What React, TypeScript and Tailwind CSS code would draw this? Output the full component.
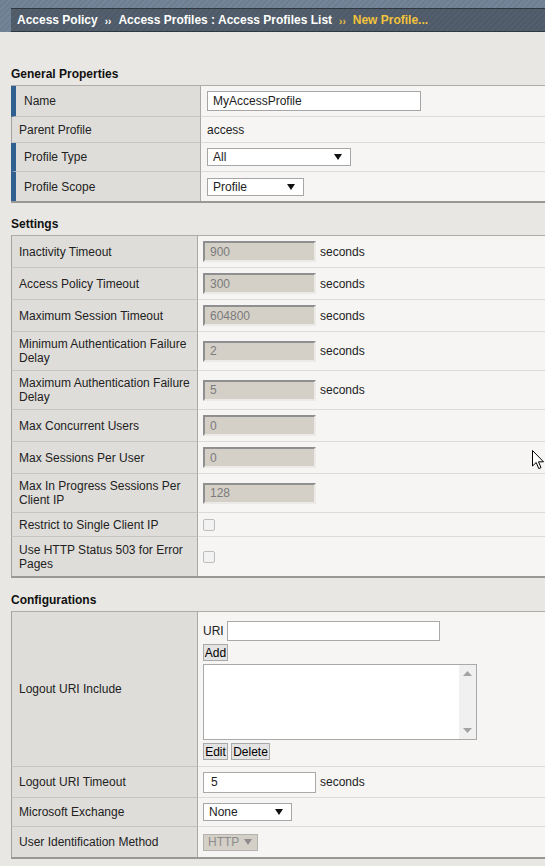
import React from "react";

function Arrow({ color = "#111" }: { color?: string }) {
  return (
    <svg width="8" height="6" viewBox="0 0 8 6">
      <path d="M0 0 L8 0 L4 6 Z" fill={color} />
    </svg>
  );
}

function Row({
  label,
  h,
  lw,
  blue,
  last,
  top,
  children,
}: {
  label: React.ReactNode;
  h: string;
  lw: string;
  blue?: boolean;
  last?: boolean;
  top?: boolean;
  children?: React.ReactNode;
}) {
  return (
    <div className={`flex ${h}`}>
      <div
        className={`${lw} shrink-0 bg-[#dfddd9] border-r border-r-[#aaa8a4] flex items-center leading-[14px] ${
          blue ? "border-l-[5px] border-l-[#30608f] pl-[8px]" : "border-l border-l-[#a3a19d] pl-[7px]"
        } ${last ? "" : "border-b border-b-[#c6c4c0]"}`}
      >
        <div>{label}</div>
      </div>
      <div
        className={`flex-1 bg-[#f6f5f3] flex pl-[5px] ${top ? "flex-col items-start pt-[9px]" : "items-center"} ${
          last ? "" : "border-b border-b-[#dddbd7]"
        }`}
      >
        {children}
      </div>
    </div>
  );
}

function Disabled({ value }: { value: string }) {
  return (
    <div className="w-[113px] h-[21px] bg-[#d4d0c8] border-2 border-t-[#8f8f8f] border-l-[#8f8f8f] border-r-[#eceae7] border-b-[#eceae7] text-[#7b7b7b] pl-[5px] flex items-center leading-none">
      {value}
    </div>
  );
}

function Seconds() {
  return <span className="ml-[4px]">seconds</span>;
}

function Select({ value, w }: { value: string; w: string }) {
  return (
    <div className={`${w} h-[18px] bg-white border border-[#a6a6a6] flex items-center justify-between pl-[5px] pr-[8px] leading-none`}>
      <span>{value}</span>
      <Arrow />
    </div>
  );
}

function Check() {
  return <div className="w-[12px] h-[12px] rounded-[2px] border border-[#bdbdbd] bg-[#f2f2f2]" />;
}

function Btn({ children, w }: { children: React.ReactNode; w: string }) {
  return (
    <div className={`${w} h-[17px] bg-[#e3e3e3] border border-[#a9a9a9] flex items-center justify-center leading-none text-black`}>
      {children}
    </div>
  );
}

export default function App() {
  const S = "w-[187px]";
  return (
    <div className="relative min-h-[866px] bg-[#e8e7e3] font-['Liberation_Sans',Arial,sans-serif] text-[12px] text-[#222]">
      <div className="h-[32px] pt-[8px] pl-[11px] bg-[repeating-linear-gradient(135deg,#6d7f8e_0px,#6d7f8e_2px,#73859a_2px,#73859a_4px)]">
        <div className="h-[24px] bg-[repeating-linear-gradient(135deg,#4e5a67_0px,#4e5a67_2px,#535f6c_2px,#535f6c_4px)] border-y border-y-[#2f3841] flex items-center pl-[6px] text-white font-bold text-[12px] whitespace-nowrap">
          <span>Access Policy</span>
          <span className="mx-[7px] text-[10px] mt-[3px]">››</span>
          <span>Access Profiles : Access Profiles List</span>
          <span className="mx-[7px] text-[10px] mt-[3px] text-[#f2c33c]">››</span>
          <span className="text-[#f2c33c]">New Profile...</span>
        </div>
      </div>

      <div className="pl-[11px]">
        <div className="pt-[35px] pb-[4px] leading-[14px] font-bold text-[#111]">General Properties</div>
        <div className="border-t border-t-[#aeaca8] border-b-2 border-b-[#9a9894]">
          <Row label="Name" h="h-[31px]" lw="w-[190px]" blue>
            <div className="ml-[1px] w-[214px] h-[20px] bg-white border border-[#a6a6a6] flex items-center pl-[5px] leading-none">
              MyAccessProfile
            </div>
          </Row>
          <Row label="Parent Profile" h="h-[26px]" lw="w-[190px]">
            <span className="ml-[1px]">access</span>
          </Row>
          <Row label="Profile Type" h="h-[29px]" lw="w-[190px]" blue>
            <div className="ml-[1px]">
              <Select value="All" w="w-[144px]" />
            </div>
          </Row>
          <Row label="Profile Scope" h="h-[29px]" lw="w-[190px]" blue last>
            <div className="ml-[1px]">
              <Select value="Profile" w="w-[97px]" />
            </div>
          </Row>
        </div>

        <div className="pt-[14px] pb-[4px] leading-[14px] font-bold text-[#111]">Settings</div>
        <div className="border-t border-t-[#aeaca8] border-b-2 border-b-[#9a9894]">
          <Row label="Inactivity Timeout" h="h-[32px]" lw={S}>
            <Disabled value="900" />
            <Seconds />
          </Row>
          <Row label="Access Policy Timeout" h="h-[32px]" lw={S}>
            <Disabled value="300" />
            <Seconds />
          </Row>
          <Row label="Maximum Session Timeout" h="h-[32px]" lw={S}>
            <Disabled value="604800" />
            <Seconds />
          </Row>
          <Row
            label={
              <>
                Minimum Authentication Failure
                <br />
                Delay
              </>
            }
            h="h-[39px]"
            lw={S}
          >
            <Disabled value="2" />
            <Seconds />
          </Row>
          <Row
            label={
              <>
                Maximum Authentication Failure
                <br />
                Delay
              </>
            }
            h="h-[39px]"
            lw={S}
          >
            <Disabled value="5" />
            <Seconds />
          </Row>
          <Row label="Max Concurrent Users" h="h-[32px]" lw={S}>
            <Disabled value="0" />
          </Row>
          <Row label="Max Sessions Per User" h="h-[32px]" lw={S}>
            <Disabled value="0" />
          </Row>
          <Row
            label={
              <>
                Max In Progress Sessions Per
                <br />
                Client IP
              </>
            }
            h="h-[39px]"
            lw={S}
          >
            <Disabled value="128" />
          </Row>
          <Row label="Restrict to Single Client IP" h="h-[24px]" lw={S}>
            <Check />
          </Row>
          <Row
            label={
              <>
                Use HTTP Status 503 for Error
                <br />
                Pages
              </>
            }
            h="h-[39px]"
            lw={S}
            last
          >
            <Check />
          </Row>
        </div>

        <div className="pt-[15px] pb-[4px] leading-[14px] font-bold text-[#111]">Configurations</div>
        <div className="border-t border-t-[#aeaca8] border-b-2 border-b-[#9a9894]">
          <Row label="Logout URI Include" h="h-[155px]" lw={S} top>
            <div className="flex items-center h-[20px]">
              <span>URI</span>
              <div className="ml-[3px] w-[213px] h-[20px] bg-white border border-[#a9a9a9]" />
            </div>
            <div className="mt-[3px]">
              <Btn w="w-[25px]">Add</Btn>
            </div>
            <div className="mt-[3px] w-[274px] h-[76px] bg-white border border-[#a9a9a9] flex justify-end">
              <div className="w-[17px] h-full bg-[#f0f0f0] flex flex-col items-center justify-between py-[6px]">
                <svg width="9" height="5" viewBox="0 0 9 5">
                  <path d="M0 5 L9 5 L4.5 0 Z" fill="#a3a3a3" />
                </svg>
                <svg width="9" height="5" viewBox="0 0 9 5">
                  <path d="M0 0 L9 0 L4.5 5 Z" fill="#a3a3a3" />
                </svg>
              </div>
            </div>
            <div className="mt-[3px] flex gap-[3px]">
              <Btn w="w-[25px]">Edit</Btn>
              <Btn w="w-[39px]">Delete</Btn>
            </div>
          </Row>
          <Row label="Logout URI Timeout" h="h-[31px]" lw={S}>
            <div className="w-[113px] h-[21px] bg-white border border-[#a9a9a9] flex items-center pl-[7px] leading-none">5</div>
            <Seconds />
          </Row>
          <Row label="Microsoft Exchange" h="h-[29px]" lw={S}>
            <Select value="None" w="w-[89px]" />
          </Row>
          <Row label="User Identification Method" h="h-[30px]" lw={S} last>
            <div className="w-[55px] h-[17px] bg-[#d4d0c8] border border-[#b5b3b0] flex items-center pl-[4px] gap-[5px] text-[#8c8c8c] leading-none">
              <span>HTTP</span>
              <Arrow color="#8c8c8c" />
            </div>
          </Row>
        </div>
      </div>

      <svg className="absolute left-[532px] top-[450px]" width="13" height="20" viewBox="0 0 13 20">
        <path d="M0.5 0.5 L0.5 16 L4.2 12.5 L6.8 18.6 L9 17.6 L6.5 11.8 L11.5 11.8 Z" fill="#fff" stroke="#000" strokeWidth="1" strokeLinejoin="round" />
      </svg>
    </div>
  );
}
